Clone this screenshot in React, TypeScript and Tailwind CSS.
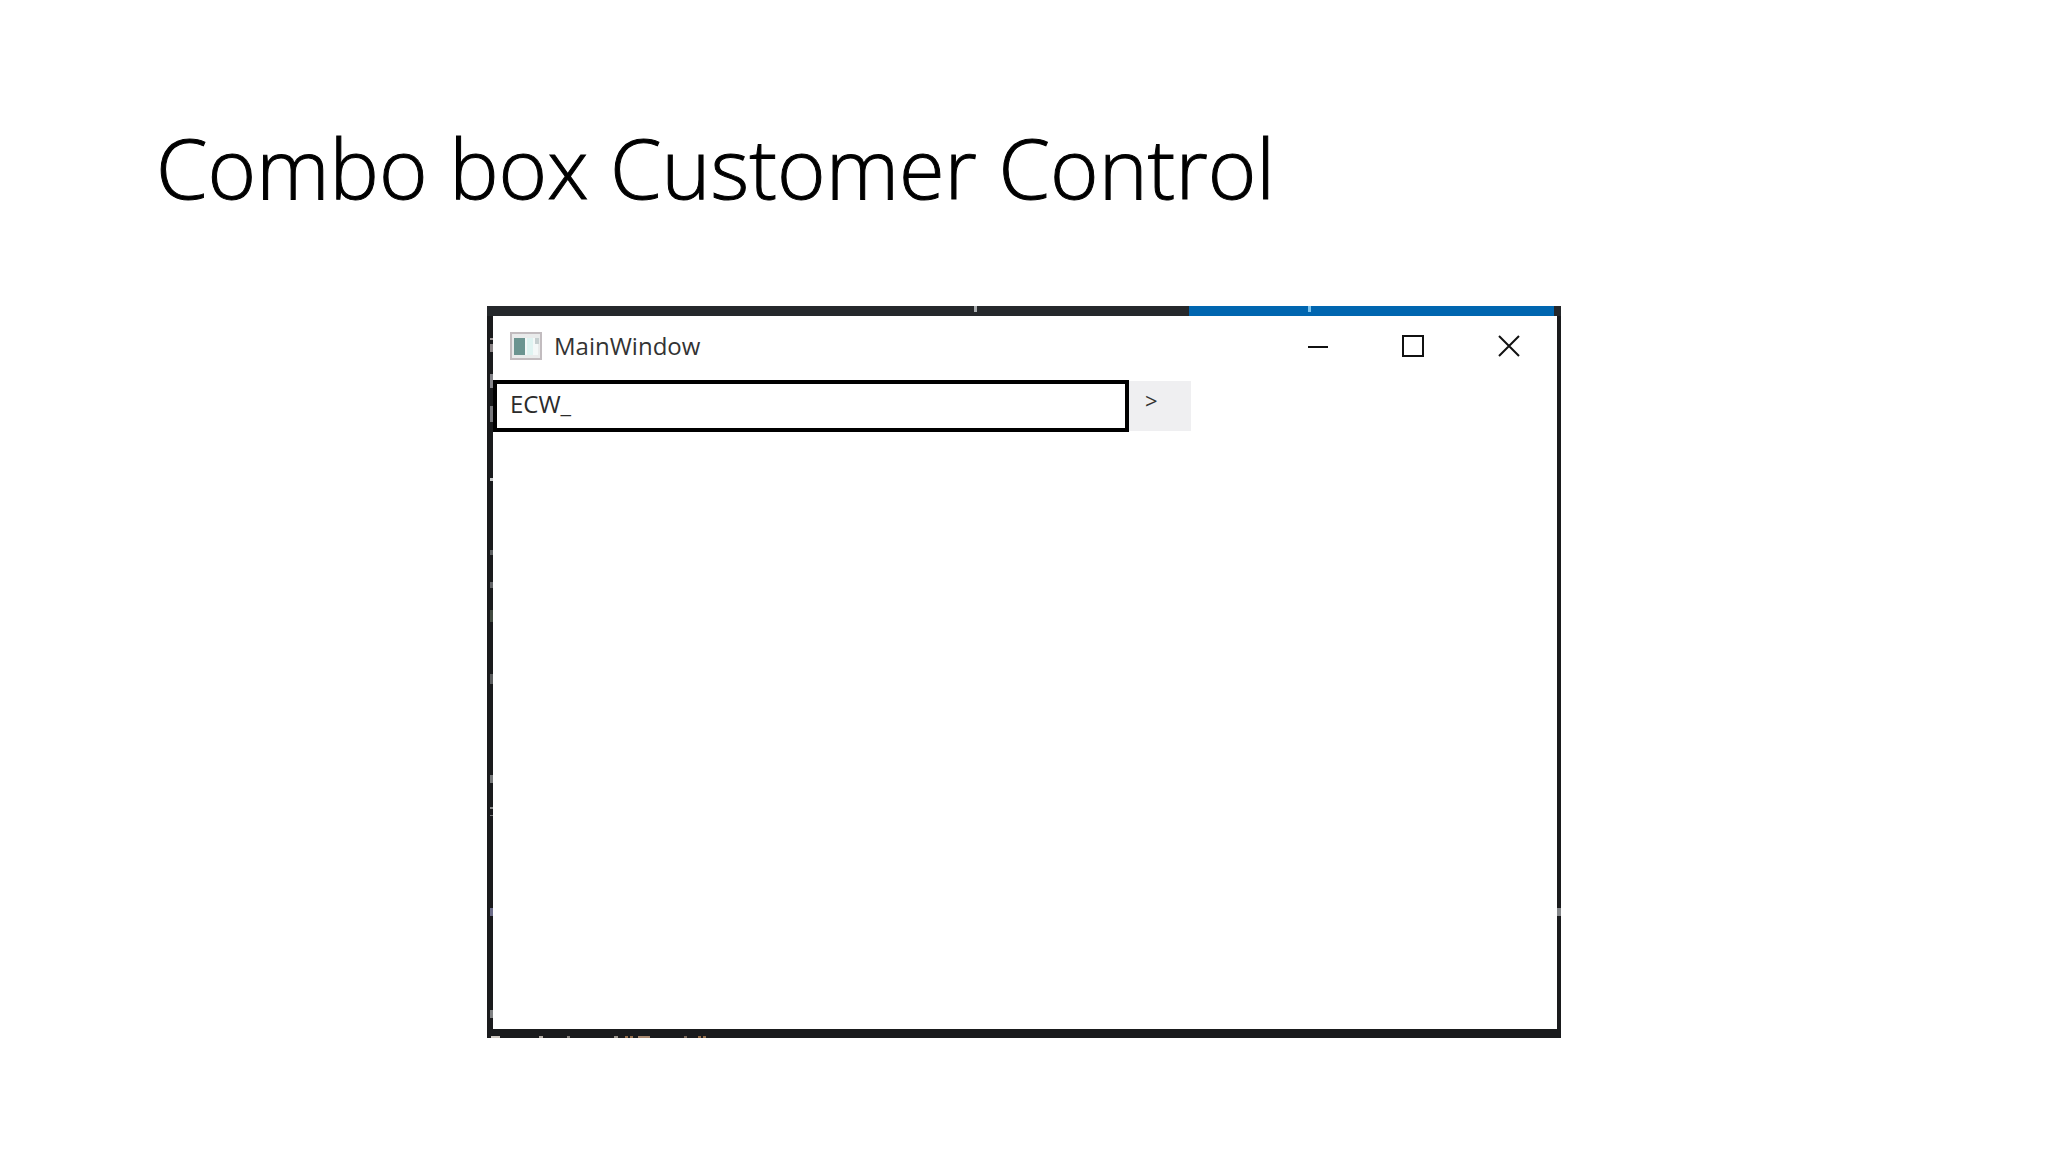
const leftMarks = [
  { y: 32, height: 2, fill: "#a09a9a" },
  { y: 38, height: 8, fill: "#8b8587" },
  { y: 68, height: 14, fill: "#85858a" },
  { y: 100, height: 16, fill: "#77777b" },
  { y: 172, height: 3, fill: "#c9cacb" },
  { y: 244, height: 5, fill: "#5d6062" },
  { y: 276, height: 6, fill: "#626466" },
  { y: 304, height: 12, fill: "#414a40" },
  { y: 368, height: 10, fill: "#5b5d5e" },
  { y: 469, height: 8, fill: "#77797a" },
  { y: 501, height: 2, fill: "#8b8b8b" },
  { y: 509, height: 1, fill: "#77797a" },
  { y: 602, height: 8, fill: "#6c6c88" },
  { y: 704, height: 8, fill: "#7f8183" },
];

const bottomMarks = [
  { x: 4, width: 9, fill: "#cfc9c2" },
  { x: 52, width: 4, fill: "#b5afa8" },
  { x: 80, width: 3, fill: "#8c8883" },
  { x: 127, width: 4, fill: "#9b958c" },
  { x: 138, width: 3, fill: "#97714f" },
  { x: 143, width: 3, fill: "#97714f" },
  { x: 151, width: 12, fill: "#a88970" },
  { x: 197, width: 3, fill: "#7c6a5c" },
  { x: 211, width: 3, fill: "#97714f" },
  { x: 216, width: 3, fill: "#97714f" },
];

const AppIcon = () => {
  return (
    <svg width="32" height="28" viewBox="0 0 32 28" aria-hidden="true">
      <rect x="1" y="1" width="30" height="26" fill="#e9ebeb" stroke="#c2bcbf" strokeWidth="2" />
      <rect x="4" y="6" width="24" height="17" fill="#f4f8f8" />
      <rect x="4" y="6" width="11" height="17" fill="#6b9490" />
      <rect x="17" y="6" width="6" height="17" fill="#dff3f1" />
      <rect x="25" y="6" width="4" height="6" fill="#c6cfd0" />
    </svg>
  );
};

const TitleBar = () => {
  return (
    <div className="flex h-16 items-start justify-between">
      <div className="flex items-center gap-3 pl-[17px] pt-3">
        <AppIcon />
        <h2 className="text-[24px] leading-9 text-[#333333]">MainWindow</h2>
      </div>
      <div className="flex">
        <button aria-label="Minimize" className="flex h-[60px] w-24 items-center justify-center">
          <svg width="22" height="22" viewBox="0 0 22 22" stroke="#111111" strokeWidth="2">
            <path d="M2 12H22" />
          </svg>
        </button>
        <button aria-label="Maximize" className="flex h-[60px] w-24 items-center justify-center">
          <svg width="22" height="22" viewBox="0 0 22 22" fill="none" stroke="#111111" strokeWidth="2">
            <rect x="1" y="1" width="20" height="20" />
          </svg>
        </button>
        <button aria-label="Close" className="flex h-[60px] w-24 items-center justify-center">
          <svg width="22" height="22" viewBox="0 0 22 22" stroke="#111111" strokeWidth="2">
            <path d="M1 1L21 21M21 1L1 21" />
          </svg>
        </button>
      </div>
    </div>
  );
};

const ComboBox = () => {
  return (
    <div className="flex items-center">
      <input
        type="text"
        aria-label="Customer"
        defaultValue="ECW_"
        className="h-[52px] w-[636px] border-4 border-black bg-white px-[13px] pb-1.5 text-[24px] text-[#2b2b2b] outline-none"
      />
      <button className="flex h-[50px] w-[62px] items-start bg-[#efeff1] pl-4 pt-1 text-[22px] leading-[30px] text-[#333333]">
        &gt;
      </button>
    </div>
  );
};

const App = () => {
  return (
    <div className="min-h-screen bg-white px-8 pt-[115px] [font-family:'Open_Sans','Noto_Sans',sans-serif]">
      <h1 className="pl-[124px] text-[83px] font-light leading-[104px] text-black [-webkit-text-stroke:1px_black]">
        Combo box Customer Control
      </h1>
      <div className="relative mx-auto mt-[87px] w-full max-w-[1074px] bg-[#1a1b1d] pb-[9px] pl-[6px] pr-1">
        <div className="-ml-[6px] -mr-1 flex h-[10px] bg-[#25282b]">
          <div className="ml-[487px] h-[6px] w-[3px] bg-[#a9adb0]" />
          <div className="ml-auto mr-[7px] flex h-full w-[34%] justify-center bg-[#0066b0]">
            <div className="mr-[124px] h-[6px] w-[3px] bg-[#7cc4ee]" />
          </div>
        </div>
        <div className="min-h-[713px] bg-white">
          <TitleBar />
          <ComboBox />
        </div>
        <svg className="absolute left-0 top-0" width="6" height="732" aria-hidden="true">
          {leftMarks.map((mark) => (
            <rect key={mark.y} x="3" y={mark.y} width="3" height={mark.height} fill={mark.fill} />
          ))}
        </svg>
        <svg className="absolute right-0 top-0" width="4" height="732" aria-hidden="true">
          <rect x="0" y="602" width="4" height="8" fill="#85878a" />
        </svg>
        <svg className="absolute bottom-0 left-0" width="240" height="2" aria-hidden="true">
          {bottomMarks.map((mark) => (
            <rect key={mark.x} x={mark.x} y="0" width={mark.width} height="2" fill={mark.fill} />
          ))}
        </svg>
      </div>
    </div>
  );
};

export default App;
